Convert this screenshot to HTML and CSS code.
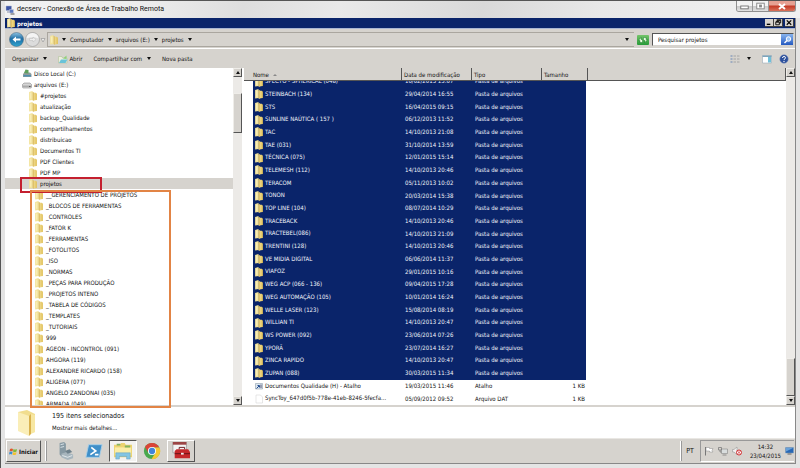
FILE: index.html
```html
<!DOCTYPE html>
<html lang="pt-BR">
<head>
    <meta charset="UTF-8">
    <meta name="viewport" content="width=device-width, initial-scale=1.0">
    <title>decserv - Conexão de Área de Trabalho Remota</title>
    <link rel="stylesheet" href="styles.css">
</head>
<body>
    <svg class="sprite" aria-hidden="true">
      <linearGradient id="gold" x1="0" x2="1"><stop offset="0" stop-color="#f8ecae"/><stop offset="1" stop-color="#dfbd52"/></linearGradient>
      <linearGradient id="round" x1="0" y1="0" x2="0" y2="1"><stop offset="0" stop-color="#8fc4e2"/><stop offset=".45" stop-color="#1f6ea6"/><stop offset="1" stop-color="#2fa5cf"/></linearGradient>
      <symbol id="folder" viewBox="1 0 14 18">
        <path d="M1 2l6-2v16l-6 1z" fill="#f3e39a"/>
        <path d="M7 3h6l2 2v11l-8 1z" fill="url(#gold)"/>
        <path d="M7 1l3 2v15l-3-2z" fill="#dfc26a"/>
        <path d="M4 3v11" stroke="#fffbe0" fill="none"/>
      </symbol>
      <symbol id="bigfolder" viewBox="0 0 20 26">
        <path d="M1 2l9-2 8 4v18l-8 2-9-4z" fill="#f1dd8e"/>
        <path d="M1 2l11 4v20L1 21z" fill="#faeeb8"/>
        <path d="M12 6l2-2v20l-2 2z" fill="#d9b24e"/>
        <path d="M14 4l4 1v17l-4 2z" fill="#f7e7a2"/>
      </symbol>
    </svg>

    <header class="rdp-title">
      <svg class="ic10" viewBox="0 0 20 20"><path d="M2 2h11v9H2z" fill="#3d55a5" stroke="#a9b3cc"/><path d="M4 13h7v2H4z" fill="#8c94a8"/><path d="M9 9h8v7H9z" fill="#5878c0" stroke="#ccd"/><path d="M11 18h8" stroke="#555" stroke-width="2"/></svg>
      <h1>decserv - Conexão de Área de Trabalho Remota</h1>
      <div class="rdp-buttons">
        <button aria-label="Minimizar conexão"><svg viewBox="0 0 16 10"><rect x="4" y="5" width="8" height="3" fill="#fff" stroke="#777"/></svg></button>
        <button aria-label="Restaurar conexão"><svg viewBox="0 0 16 10"><rect x="4" y="2" width="8" height="6" fill="#fff" stroke="#888"/><rect x="7" y="4" width="2" height="2" fill="#ddd" stroke="#888"/></svg></button>
        <button class="rdp-close" aria-label="Fechar conexão"><svg viewBox="0 0 26 10"><path d="M10 3l6 5M16 3l-6 5" stroke="#fff" stroke-width="2"/></svg></button>
      </div>
    </header>

    <div class="desktop">
      <div class="win-title">
        <svg class="folder"><use href="#folder"/></svg>
        <h2>projetos</h2>
        <button aria-label="Minimizar"><svg viewBox="0 0 9 8"><path d="M2 6h4" stroke="#000" stroke-width="1.500"/></svg></button>
        <button aria-label="Restaurar"><svg viewBox="0 0 9 8"><path d="M3.500 3V1.500h4v3H6M2 3.500h4v3H2zM2 3h4M3 1h5" fill="none" stroke="#000"/></svg></button>
        <button class="gap" aria-label="Fechar"><svg viewBox="0 0 9 8"><path d="M2 1.500l5 5M7 1.500l-5 5" stroke="#000" stroke-width="1.300"/></svg></button>
      </div>

      <div class="address-row">
        <button class="nav-btn" aria-label="Voltar"><svg viewBox="0 0 30 30"><circle cx="15" cy="15" r="14" fill="url(#round)" stroke="#3e5f7a"/><path d="M7 15l7-6v4h9v4h-9v4z" fill="#fff"/></svg></button>
        <button class="nav-btn" aria-label="Avançar"><svg viewBox="0 0 30 30"><circle cx="15" cy="15" r="14" fill="#dcdcdc" stroke="#888"/><path d="M3 13a12 11 0 0 1 24 0q-12-5-24 0" fill="#f4f4f4"/><path d="M22 15l-6-5v3H9v4h7v3z" fill="#eee" stroke="#bbb"/></svg></button>
        <svg class="arrow" viewBox="0 0 6 6"><path d="M1 1.500h4L3 5z" fill="#eee" stroke="#999" stroke-width=".7"/></svg>
        <nav class="address" aria-label="Endereço">
          <svg class="folder"><use href="#folder"/></svg>
          <span class="caret"></span><a href="#">Computador</a>
          <span class="caret"></span><a href="#">arquivos (E:)</a>
          <span class="caret"></span><a href="#">projetos</a>
          <span class="caret"></span>
          <button class="address-drop" aria-label="Locais anteriores"><span class="caret"></span></button>
        </nav>
        <button class="refresh" aria-label="Atualizar"><svg viewBox="0 0 24 20"><path d="M3 11l5-6v4h3v6H6v-4zM21 9l-5 6v-4h-3V5h5v4z" fill="#e9ffe0" stroke="#08691d" stroke-width=".8"/></svg></button>
        <div class="search">
          <input type="text" value="Pesquisar projetos" aria-label="Pesquisar projetos">
          <button aria-label="Pesquisar"><svg viewBox="0 0 22 20"><circle cx="13" cy="8" r="4.500" fill="#9ec6f6" stroke="#fff" stroke-width="2"/><path d="M10 11l-5 5" stroke="#fff" stroke-width="3"/></svg></button>
        </div>
      </div>

      <div class="toolbar">
        <button>Organizar <span class="caret"></span></button>
        <button class="open"><svg class="ic10" viewBox="0 0 20 20"><path d="M1 5h7l1 3h9v10H1z" fill="#eef0dd" stroke="#a8bd91"/><path d="M2 18l4-7h13l-4 7z" fill="#6ac3d9"/><path d="M10 9l7-6v7" fill="#8fd079"/></svg>Abrir</button>
        <button>Compartilhar com <span class="caret"></span></button>
        <button>Nova pasta</button>
        <button class="view" aria-label="Alterar modo de exibição"><svg class="ic10" viewBox="0 0 20 20"><path d="M1 4h4M1 10h4M1 16h4" stroke="#8ca0bd" stroke-width="3"/><path d="M7 4h5M7 10h5M7 16h5M14 4h5M14 10h5M14 16h5" stroke="#a4a4a4" stroke-width="2"/></svg><span class="caret"></span></button>
        <button class="preview" aria-label="Painel de visualização"><svg class="ic10" viewBox="0 0 20 18"><path d="M1 2h18v15H1z" fill="#fff" stroke="#8a9fae"/><path d="M1 2h18v3H1z" fill="#7fa4ba"/><path d="M12 5h6v11h-6z" fill="#70bfd8"/></svg></button>
        <button aria-label="Ajuda"><svg class="ic10" viewBox="0 0 20 20"><circle cx="10" cy="10" r="8.500" fill="#2b4f9c" stroke="#8797bd"/><path d="M7 8q0-3 3-3t3 2.500q0 2-3 3.500v1" fill="none" stroke="#fff" stroke-width="2"/><circle cx="10" cy="15" r="1.300" fill="#fff"/></svg></button>
      </div>

      <main>
        <div class="nav-pane">
          <ul class="tree" id="tree">
            <li><svg class="drive" viewBox="0 0 20 18"><path d="M2 10l3-3h11l3 3v6H2z" fill="#8f9b9b"/><path d="M4 8l3-7 6 1v7z" fill="#5fa05b"/><path d="M3 12h15v3H3z" fill="#4d8fb0"/></svg>Disco Local (C:)</li>
            <li><svg class="drive" viewBox="0 0 20 18"><path d="M1 9l3-3h12l3 3v5q0 2-2 2H3q-2 0-2-2z" fill="#d5d5d5" stroke="#777"/><path d="M2 11h16v3H2z" fill="#aaa"/><path d="M14 12h3v2h-3z" fill="#555"/></svg>arquivos (E:)</li>
          </ul>
          <div class="scrollbar">
            <button aria-label="Rolar para cima"><span class="caret up"></span></button>
            <div class="thumb tree-thumb"></div>
            <button aria-label="Rolar para baixo"><span class="caret"></span></button>
          </div>
          <div class="mark-red"></div>
          <div class="mark-orange"></div>
        </div>

        <div class="list-pane">
          <div class="list">
            <table>
              <colgroup><col class="c-name"><col class="c-date"><col class="c-type"><col class="c-size"><col></colgroup>
              <thead>
                <tr><th>Nome <span class="caret up sort"></span></th><th>Data de modificação</th><th>Tipo</th><th>Tamanho</th><th></th></tr>
              </thead>
              <tbody id="rows"></tbody>
            </table>
          </div>
          <div class="scrollbar">
            <button aria-label="Rolar lista para cima"><span class="caret up"></span></button>
            <div class="thumb list-thumb"></div>
            <button aria-label="Rolar lista para baixo"><span class="caret"></span></button>
          </div>
        </div>
      </main>

      <section class="details">
        <svg viewBox="0 0 20 26"><use href="#bigfolder"/></svg>
        <div>
          <p>195 itens selecionados</p>
          <a href="#">Mostrar mais detalhes...</a>
        </div>
      </section>

      <footer class="taskbar">
        <button class="start"><svg viewBox="0 0 18 18"><path d="M2 4q3-2 6 0L7 9Q4 7 1 9z" fill="#e2572b"/><path d="M9 4q3 2 7 0l-1 5q-4 2-7 0z" fill="#7fb93b"/><path d="M1 10q3-2 6 0l-1 5q-3-2-6 0z" fill="#3b8ed0"/><path d="M8 10q3 2 7 0l-1 5q-4 2-7 0z" fill="#f3c02f"/></svg>Iniciar</button>
        <span class="grip"></span>
        <button class="task" aria-label="Gerenciador de Servidores"><svg viewBox="0 0 20 20"><path d="M4 1l5-1 2 2v13l-5 1-2-2z" fill="#8799a3"/><path d="M5 3l4-1M5 6l4-1" stroke="#dfe8ec"/><path d="M6 13l6-2 7 3v4l-6 2-7-3z" fill="#a7b5bd"/><path d="M10 10l5-2 3 3-5 2z" fill="#6e818c"/><path d="M7 15l6 2 5-2" fill="none" stroke="#e5ecef"/></svg></button>
        <button class="task" aria-label="PowerShell"><svg viewBox="0 0 20 20"><path d="M4 3h15l-3 14H1z" fill="#3f8fc9" stroke="#a8cfe8"/><path d="M7 6l5 4-6 4M11 14h4" fill="none" stroke="#fff" stroke-width="1.800"/></svg></button>
        <button class="task active" aria-label="Windows Explorer"><svg viewBox="0 0 24 20"><path d="M2 3h6l2-2h4l1 2h7v14H2z" fill="#ecd370"/><path d="M3 6h18v9H3z" fill="#faeda6"/><path d="M5 3h4M14 5h6" stroke="#84b45e" stroke-width="2"/><path d="M4 12h16v7h-4v-3H8v3H4z" fill="#83c5e3" stroke="#5c9bbb" stroke-width=".5"/></svg></button>
        <button class="task" aria-label="Chrome"><svg viewBox="0 0 20 20"><circle cx="10" cy="10" r="9" fill="#4aa84e"/><path d="M2.200 5.500A9 9 0 0 1 18 6h-8l-4 6z" fill="#db4437"/><path d="M18.200 6A9 9 0 0 1 9.500 19l4.500-7-4-6z" fill="#f5c934"/><circle cx="10" cy="10" r="4.500" fill="#fff"/><circle cx="10" cy="10" r="3.500" fill="#4285d8"/></svg></button>
        <button class="task raised" aria-label="Ferramentas"><svg viewBox="0 0 20 20"><path d="M1 0h15v12H1z" fill="#f3f3f3" stroke="#888" stroke-width=".7"/><path d="M1 0h15v3H1z" fill="#9c4545"/><path d="M3 10l2-2h13l2 3v7H3z" fill="#c5282b"/><path d="M8 8V6h6v2M3 13h17" fill="none" stroke="#601014"/><path d="M10 12h3v2h-3z" fill="#eee"/></svg></button>
        <span class="grip lang-grip"></span>
        <span class="lang">PT</span>
        <div class="tray">
          <svg class="ic10" viewBox="0 0 20 20"><path d="M3 2v17" stroke="#777" stroke-width="2"/><path d="M4 3h7v2h7l-2 4 2 3h-7v-2H4z" fill="#fff" stroke="#888"/></svg>
          <svg class="ic10" viewBox="0 0 20 20"><path d="M7 6h12v9H7z" fill="#d9dddd" stroke="#777"/><path d="M9 18h8M1 3h6v5H1zM4 8v4h3" fill="none" stroke="#777" stroke-width="1.500"/></svg>
          <svg class="ic10" viewBox="0 0 20 20"><path d="M1 7h3l6-5v15l-6-5H1z" fill="#f2f2f2" stroke="#888"/><circle cx="14" cy="13" r="5" fill="#fff" stroke="#cf2f31" stroke-width="2"/><path d="M11.500 10.500l5 5M16.500 10.500l-5 5" stroke="#cf2f31" stroke-width="1.600"/></svg>
          <time datetime="2015-04-23T14:32">14:32<br>23/04/2015</time>
          <svg class="show-desktop" viewBox="0 0 18 16"><path d="M1 1h16v11H1z" fill="#2868b5" stroke="#7f9dbb"/><path d="M2 2h14L2 9z" fill="#69a2da"/><path d="M5 14h8" stroke="#666" stroke-width="2"/></svg>
        </div>
      </footer>
    </div>

    <script>
      const folderIcon = '<svg class="folder"><use href="#folder"/></svg>';
      const tree = document.getElementById("tree");
      const rows = document.getElementById("rows");

      const folders = ["#projetos", "atualização", "backup_Qualidade", "compartilhamentos", "distribuicao",
        "Documentos TI", "PDF Clientes", "PDF MP", "projetos"];

      const projects = ["__GERENCIAMENTO DE PROJETOS", "_BLOCOS DE FERRAMENTAS", "_CONTROLES", "_FATOR K",
        "_FERRAMENTAS", "_FOTOLITOS", "_ISO", "_NORMAS", "_PEÇAS PARA PRODUÇÃO", "_PROJETOS INTENO",
        "_TABELA DE CÓDIGOS", "_TEMPLATES", "_TUTORIAIS", "999", "AGEON - INCONTROL (091)", "AHGORA (119)",
        "ALEXANDRE RICARDO (158)", "ALIGERA (077)", "ANGELO ZANDONAI (035)", "ARMADA (049)"];

      const files = [
        ["SPECTO - SPHERICAL (048)", "10/02/2015 15:07"],
        ["STEINBACH (134)", "29/04/2014 16:55"],
        ["STS", "16/04/2015 09:15"],
        ["SUNLINE NAÚTICA ( 157 )", "06/12/2013 11:52"],
        ["TAC", "14/10/2013 21:08"],
        ["TAE (031)", "31/10/2014 13:59"],
        ["TÉCNICA (075)", "12/01/2015 15:14"],
        ["TELEMESH (112)", "14/10/2013 20:46"],
        ["TERACOM", "05/11/2013 10:02"],
        ["TONON", "20/03/2014 15:38"],
        ["TOP LINE (104)", "08/07/2014 10:29"],
        ["TRACEBACK", "14/10/2013 20:46"],
        ["TRACTEBEL(086)", "14/10/2013 21:09"],
        ["TRENTINI (128)", "14/10/2013 20:46"],
        ["VE MIDIA DIGITAL", "06/06/2014 11:37"],
        ["VIAFOZ", "29/01/2015 10:16"],
        ["WEG ACP (066 - 136)", "09/04/2015 17:28"],
        ["WEG AUTOMAÇÃO (105)", "10/01/2014 16:24"],
        ["WELLE LASER (123)", "15/08/2014 08:19"],
        ["WILLIAN TI", "14/10/2013 20:47"],
        ["WS POWER (092)", "23/06/2014 07:26"],
        ["YPORÃ", "23/07/2014 16:27"],
        ["ZINCA RAPIDO", "14/10/2013 20:47"],
        ["ZUPAN (088)", "30/03/2015 11:34"]
      ];

      function addTreeItem(name, className) {
          const item = document.createElement("li");
          item.className = className;
          item.innerHTML = folderIcon + name;
          tree.appendChild(item);
      }

      function addRow(icon, name, date, type, size, className) {
          const row = document.createElement("tr");
          row.className = className;
          row.innerHTML = `<td>${icon}${name}</td><td>${date}</td><td>${type}</td><td>${size}</td><td></td>`;
          rows.appendChild(row);
      }

      folders.forEach(name => addTreeItem(name, name === "projetos" ? "level2 current" : "level2"));
      projects.forEach(name => addTreeItem(name, "level3"));

      files.forEach(file => addRow(folderIcon, file[0], file[1], "Pasta de arquivos", "", "selected"));
      addRow('<svg class="folder" viewBox="0 0 16 18"><path d="M1 4h14v11H1z" fill="#dbe6ef" stroke="#7c8c9c"/><path d="M3 14l5-5M5 8h4v4" stroke="#234c8f" stroke-width="2" fill="none"/><path d="M12 6v7" stroke="#557" stroke-width="2"/></svg>',
        "Documentos Qualidade (H) - Atalho", "19/03/2015 11:46", "Atalho", "1 KB", "");
      addRow('<svg class="folder" viewBox="0 0 16 18"><path d="M2 1h9l4 4v12H2z" fill="#fff" stroke="#ccc"/></svg>',
        "SyncToy_647d0f5b-778e-41eb-8246-5fecfa...", "05/09/2012 09:52", "Arquivo DAT", "1 KB", "");
  </script>
</body>
</html>
```
FILE: styles.css
```css
* {
    box-sizing: border-box;
}
body {
    display: flex;
    flex-direction: column;
    height: 100vh;
    margin: 0;
    padding: 0 4px 4px;
    overflow: hidden;
    font-family: "DejaVu Sans Condensed", "DejaVu Sans", Tahoma, sans-serif;
    font-size: 6px;
    line-height: 11px;
    color: #111;
    background-color: #e4e4e4;
    border-top: 1px solid #555;
    border-left: 1px solid #555;
}
h1, h2, p, ul {
    margin: 0;
    padding: 0;
    font-weight: normal;
}
button {
    display: flex;
    align-items: center;
    justify-content: center;
    padding: 0;
    border: none;
    background: none;
    font: inherit;
    color: inherit;
}
a {
    color: inherit;
    text-decoration: none;
}
svg {
    flex: none;
}
.sprite {
    position: absolute;
    width: 0;
    height: 0;
}
.folder {
    width: 8px;
    height: 10px;
}
.ic10 {
    width: 10px;
    height: 10px;
}
.caret {
    width: 0;
    height: 0;
    border: 2px solid transparent;
    border-top: 3px solid #111;
    border-bottom: none;
}
.caret.up {
    border-top: none;
    border-bottom: 3px solid #111;
}

/* remote desktop frame */
.rdp-title {
    display: flex;
    flex: none;
    align-items: center;
    gap: 2px;
    height: 17px;
    margin-right: -4px;
    background: linear-gradient(100deg, #f2f2f2 0%, #ececec 18%, #dedede 30%, #e9e9e9 42%, #d9d9d9 60%, #e8e8e8 75%, #f1f1f1 100%);
}
.rdp-title h1 {
    font-family: Roboto, sans-serif;
    font-size: 7px;
}
.rdp-buttons {
    display: flex;
    align-self: flex-start;
    margin-left: auto;
    margin-right: 4px;
    border: 1px solid #8f8f8f;
    border-top: none;
    border-radius: 0 0 3px 3px;
    overflow: hidden;
}
.rdp-buttons svg {
    width: 100%;
    height: 10px;
}
.rdp-buttons button {
    width: 16px;
    height: 10px;
    background: linear-gradient(#f3f3f3 45%, #c9c9c9 50%, #e2e2e2);
    border-right: 1px solid #999;
}
.rdp-buttons .rdp-close {
    width: 26px;
    background: linear-gradient(#e6a193 40%, #c43a26 50%, #d9715a);
    border: none;
}
.desktop {
    display: flex;
    flex: 1;
    flex-direction: column;
    min-height: 0;
    border-right: 1px solid #888;
    border-bottom: 1px solid #888;
    background-color: #d6d3ce;
}

/* explorer window */
.win-title {
    display: flex;
    flex: none;
    align-items: center;
    height: 10px;
    padding: 0 1px 0 2px;
    color: #fff;
    background-color: #0a246a;
}
.win-title h2 {
    flex: 1;
    margin-left: 2px;
    font-size: 6px;
    font-weight: bold;
}
.win-title button {
    width: 9px;
    height: 8px;
    background-color: #d6d3ce;
    border-right: 1px solid #404040;
    border-bottom: 1px solid #404040;
}
.win-title .gap {
    margin-left: 2px;
}
.address-row {
    display: flex;
    flex: none;
    align-items: center;
    height: 21px;
    padding: 2px 1px 0 3px;
    border-top: 1px solid #a9b6d2;
    border-bottom: 1px solid #fff;
}
.nav-btn {
    width: 16px;
    height: 16px;
}
.nav-btn svg {
    width: 15px;
    height: 15px;
}
.arrow {
    width: 6px;
    height: 6px;
    margin-right: 1px;
}
.address {
    display: flex;
    flex: 1;
    align-items: center;
    gap: 4px;
    height: 15px;
    padding-left: 2px;
    border: 1px solid #aaa69f;
    border-right: none;
}
.address-drop {
    width: 14px;
    margin-left: auto;
}
.refresh {
    width: 12px;
    height: 10px;
    margin: 0 3px;
    background: linear-gradient(#74c46a, #279a39);
    border-radius: 1px;
}
.refresh svg {
    width: 12px;
    height: 10px;
}
.search {
    display: flex;
    align-items: center;
    flex: 0 1 142px;
    height: 13px;
    border: 1px solid #555;
    border-right-color: #d6d3ce;
    border-bottom-color: #d6d3ce;
    background-color: #fff;
}
.search input {
    flex: 1;
    min-width: 0;
    padding: 0 5px;
    border: none;
    font: inherit;
    color: inherit;
    background: none;
}
.search button {
    width: 12px;
    height: 11px;
    background: linear-gradient(#89b5ee, #2459c0);
}
.search svg {
    width: 11px;
    height: 10px;
}
.toolbar {
    display: flex;
    flex: none;
    align-items: center;
    gap: 11px;
    height: 19px;
    padding: 0 6px 0 7px;
}
.toolbar button {
    gap: 5px;
}
.toolbar .open {
    gap: 1px;
}
.toolbar .view {
    gap: 7px;
    margin-left: auto;
}
.toolbar .preview {
    margin-right: -4px;
}
main {
    display: flex;
    flex: 1;
    min-height: 0;
    background-color: #fff;
}
.nav-pane {
    position: relative;
    display: flex;
    flex: 0 0 237px;
    min-height: 0;
}
.tree {
    flex: 1;
    overflow: hidden;
    list-style: none;
}
.tree li {
    display: flex;
    align-items: center;
    gap: 2px;
    height: 11px;
    padding-left: 17px;
    white-space: nowrap;
}
.tree .level2 {
    gap: 3px;
    padding-left: 24px;
}
.tree .level3 {
    gap: 3px;
    padding-left: 30px;
}
.tree .current {
    background-color: #d6d3ce;
}
.drive {
    width: 10px;
    height: 9px;
}
.scrollbar {
    display: flex;
    flex: 0 0 9px;
    flex-direction: column;
    background-color: #eceae7;
}
.scrollbar button, .thumb {
    flex: none;
    background-color: #d6d3ce;
    border: 1px solid #efede9;
    border-right-color: #555;
    border-bottom-color: #555;
}
.scrollbar button {
    height: 9px;
}
.tree-thumb {
    height: 40px;
    margin: 16px 0 auto;
}
.list-thumb {
    height: 38px;
    margin-top: auto;
}

/* highlight boxes drawn over the tree */
.mark-red, .mark-orange {
    position: absolute;
    pointer-events: none;
}
.mark-red {
    top: 109px;
    left: 15px;
    width: 82px;
    height: 16px;
    border: 2px solid #c4202f;
}
.mark-orange {
    top: 122px;
    left: 25px;
    bottom: -3px;
    width: 141px;
    border: 2px solid #e28445;
}
.list-pane {
    display: flex;
    flex: 1;
    min-width: 0;
    margin-left: 2px;
}
/* reversed column keeps the list scrolled to its end */
.list {
    display: flex;
    flex: 1;
    flex-direction: column-reverse;
    min-width: 0;
    overflow: hidden;
}
.list table {
    flex: none;
    width: 100%;
    height: calc(100% + 6px);
    table-layout: fixed;
    border-collapse: separate;
    border-spacing: 0;
}
.c-name {
    width: 158px;
}
.c-date, .c-type {
    width: 70px;
}
.c-size {
    width: 46px;
}
.list th {
    position: sticky;
    top: 0;
    height: 13px;
    padding: 0 2px;
    text-align: left;
    font-weight: normal;
    white-space: nowrap;
    background-color: #d6d3ce;
    border-right: 1px solid #555;
    border-bottom: 1px solid #555;
}
.list th:first-child {
    padding-left: 9px;
}
.sort {
    display: inline-block;
    margin: 0 0 1px 2px;
}
.list .sort {
    border-bottom: 2px solid #888;
}
.list td {
    padding: 0 3px;
    line-height: 10px;
    white-space: nowrap;
}
.list td:first-child {
    padding: 0 0 0 2px;
    border-left: 9px solid #fff;
}
.list td:nth-child(4) {
    text-align: right;
    border-right: 2px solid #fff;
    padding-right: 1px;
}
.list td svg {
    margin-right: 2px;
    vertical-align: middle;
}
.selected td {
    color: #f2f4fa;
    background-color: #0a246a;
}
.selected td:last-child {
    background-color: #fff;
}
.details {
    display: flex;
    flex: none;
    align-items: center;
    gap: 15px;
    height: 33px;
    padding-left: 12px;
    border-top: 2px solid #d6d3ce;
    background-color: #fff;
    font-size: 7px;
}
.details svg {
    width: 20px;
    height: 26px;
}
.details a {
    font-size: 6px;
}

/* taskbar */
.taskbar {
    display: flex;
    flex: none;
    align-items: center;
    height: 25px;
    padding: 0 1px;
    border-top: 1px solid #e9e7e3;
}
.start {
    gap: 1px;
    width: 35px;
    height: 22px;
    font-weight: bold;
    border: 1px solid #fff;
    border-right-color: #555;
    border-bottom-color: #555;
}
.start svg {
    width: 9px;
    height: 9px;
}
.grip {
    width: 2px;
    height: 20px;
    margin: 0 4px;
    border-left: 1px solid #fff;
    border-right: 1px solid #999;
}
.task {
    width: 28px;
    height: 22px;
    margin-right: 1px;
}
.task svg {
    width: 18px;
    height: 18px;
}
.task.active {
    background-color: #f3f2f0;
    border: 1px solid #555;
    border-right-color: #fff;
    border-bottom-color: #fff;
}
.task.active svg {
    width: 22px;
}
.task.raised {
    border: 1px solid #fff;
    border-right-color: #555;
    border-bottom-color: #555;
}
.lang-grip {
    margin-left: auto;
}
.lang {
    padding-right: 6px;
    font-size: 7px;
}
.tray {
    display: flex;
    align-items: center;
    gap: 4px;
    height: 22px;
    padding-left: 3px;
    border: 1px solid #999;
    border-right: none;
    border-bottom-color: #fff;
}
.tray time {
    margin: 0 0 0 4px;
    line-height: 9px;
    text-align: center;
}
.show-desktop {
    width: 9px;
    height: 8px;
}
```
